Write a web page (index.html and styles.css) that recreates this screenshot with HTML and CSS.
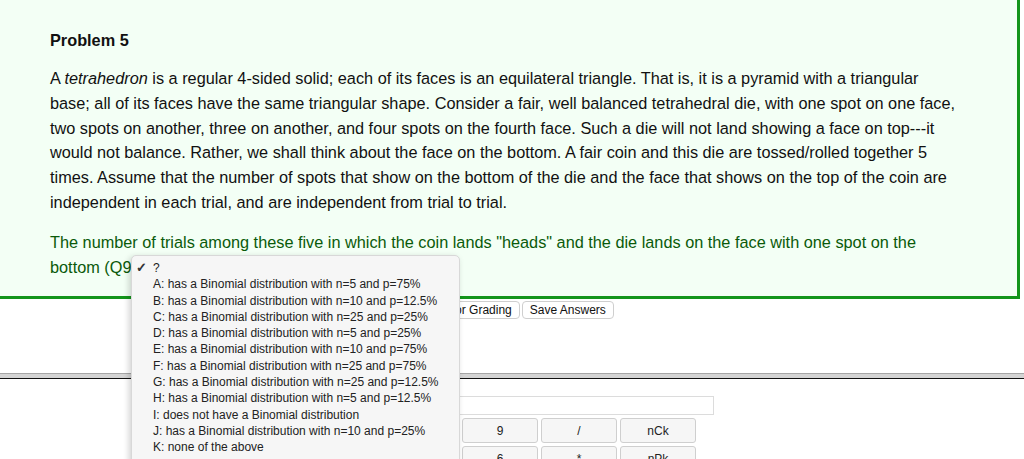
FILE: index.html
```html
<!DOCTYPE html>
<html>
<head>
<meta charset="utf-8">
<link rel="stylesheet" href="styles.css">
</head>
<body>
<div class="problem">
  <div class="problem-title">Problem 5</div>
  <p class="statement">A <i>tetrahedron</i> is a regular 4-sided solid; each of its faces is an equilateral triangle. That is, it is a pyramid with a triangular<br>base; all of its faces have the same triangular shape. Consider a fair, well balanced tetrahedral die, with one spot on one face,<br>two spots on another, three on another, and four spots on the fourth face. Such a die will not land showing a face on top---it<br>would not balance. Rather, we shall think about the face on the bottom. A fair coin and this die are tossed/rolled together 5<br>times. Assume that the number of spots that show on the bottom of the die and the face that shows on the top of the coin are<br>independent in each trial, and are independent from trial to trial.</p>
  <p class="question">The number of trials among these five in which the coin lands "heads" and the die lands on the face with one spot on the<br>bottom (Q9 <span class="select-stub"></span></p>
</div>

<div class="actions">
  <button class="btn">Preview Answers</button>
  <button class="btn">Submit Answers for Grading</button>
  <button class="btn">Save Answers</button>
</div>

<div class="divider"></div>

<div class="calc">
  <div class="calc-display"></div>
  <div class="calc-keys">
    <button class="key">7</button>
    <button class="key">8</button>
    <button class="key">9</button>
    <button class="key">/</button>
    <button class="key">nCk</button>
    <button class="key">4</button>
    <button class="key">5</button>
    <button class="key">6</button>
    <button class="key">*</button>
    <button class="key">nPk</button>
  </div>
</div>

<ul class="dropdown">
  <li class="selected"><span class="check">✓</span>?</li>
  <li>A: has a Binomial distribution with n=5 and p=75%</li>
  <li>B: has a Binomial distribution with n=10 and p=12.5%</li>
  <li>C: has a Binomial distribution with n=25 and p=25%</li>
  <li>D: has a Binomial distribution with n=5 and p=25%</li>
  <li>E: has a Binomial distribution with n=10 and p=75%</li>
  <li>F: has a Binomial distribution with n=25 and p=75%</li>
  <li>G: has a Binomial distribution with n=25 and p=12.5%</li>
  <li>H: has a Binomial distribution with n=5 and p=12.5%</li>
  <li>I: does not have a Binomial distribution</li>
  <li>J: has a Binomial distribution with n=10 and p=25%</li>
  <li>K: none of the above</li>
</ul>
</body>
</html>
```

FILE: styles.css
```css
html, body {
  margin: 0;
  padding: 0;
  background: #ffffff;
  overflow: hidden;
}
body {
  width: 1024px;
  height: 459px;
  position: relative;
  font-family: "Liberation Sans", Arial, sans-serif;
  color: #111;
}
.problem {
  width: 1020px;
  height: 299px;
  box-sizing: border-box;
  background: #f3fff5;
  border-right: 3px solid #13951b;
  border-bottom: 3px solid #13951b;
  padding: 28px 40px 0 50px;
  font-size: 16.3px;
}
.problem-title {
  font-weight: bold;
  line-height: 25px;
}
.statement {
  margin: 13px 0 0 0;
  line-height: 24.8px;
}
.question {
  margin: 15px 0 0 0;
  line-height: 24.8px;
  color: #0a5a0a;
}
.select-stub {
  display: inline-block;
  width: 10px;
}
.actions {
  display: flex;
  gap: 2px;
  padding: 2px 0 0 245px;
}
.btn {
  font-family: "Liberation Sans", Arial, sans-serif;
  font-size: 12px;
  height: 18px;
  line-height: 15px;
  padding: 0 7px;
  background: #fff;
  border: 1px solid #cfcfcf;
  border-radius: 4px;
  color: #111;
}
.divider {
  margin-top: 54px;
  height: 4px;
  background: #d4d4d4;
  border-top: 1px solid #a6a6a6;
  border-bottom: 1.5px solid #111;
}
.calc {
  padding: 17px 0 0 304px;
}
.calc-display {
  width: 408px;
  height: 17px;
  border: 1px solid #dcdcdc;
  margin-bottom: 3px;
}
.calc-keys {
  display: grid;
  grid-template-columns: repeat(5, 76px);
  grid-auto-rows: 25px;
  column-gap: 3px;
  row-gap: 3px;
}
.key {
  font-family: "Liberation Sans", Arial, sans-serif;
  font-size: 12px;
  color: #222;
  background: #f6f6f6;
  border: 1px solid #cfcfcf;
  border-radius: 3px;
  padding: 0;
}
.dropdown {
  position: absolute;
  left: 131px;
  top: 255px;
  width: 329px;
  height: 215px;
  margin: 0;
  padding: 4px 0 0 0;
  list-style: none;
  box-sizing: border-box;
  background: #f6f6f6;
  border: 1px solid #d8d8d8;
  border-radius: 5px;
  box-shadow: -2px 2px 6px rgba(0,0,0,0.18);
  font-family: "Liberation Sans", Arial, sans-serif;
  font-size: 12px;
  color: #222;
}
.dropdown li {
  height: 16.3px;
  line-height: 16.3px;
  padding-left: 21px;
  white-space: nowrap;
}
.dropdown li.selected {
  position: relative;
}
.check {
  position: absolute;
  left: 4px;
  top: 0;
  font-size: 13px;
  font-weight: bold;
  color: #333;
}
```
